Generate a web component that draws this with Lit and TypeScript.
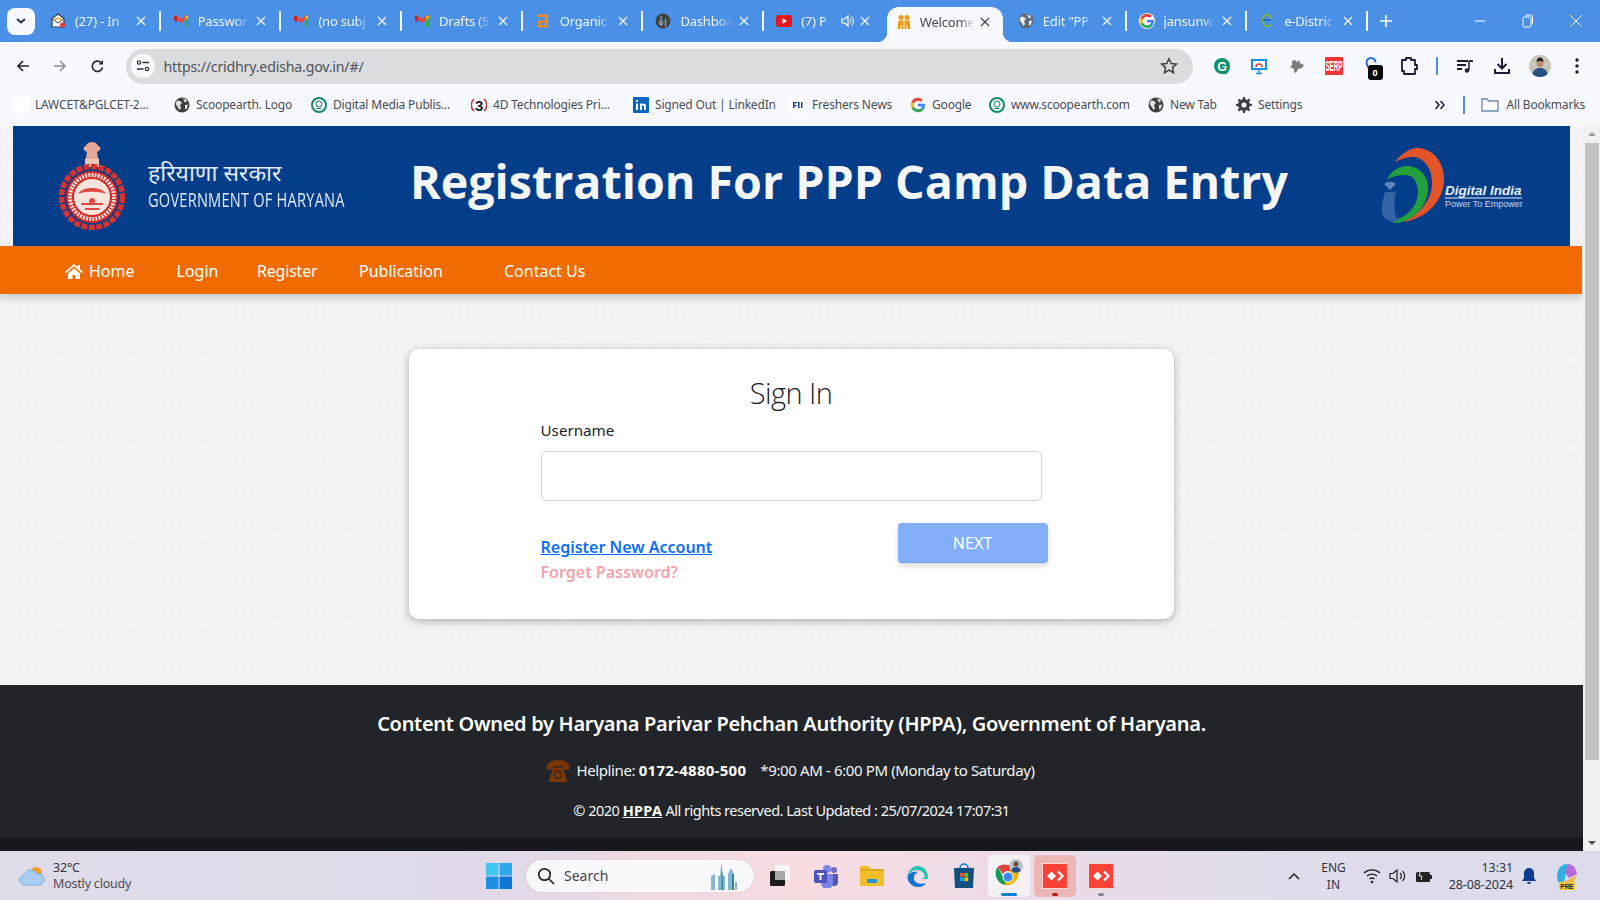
import { LitElement, html, css, svg } from "lit";
import { customElement } from "lit/decorators.js";

const globe = (c = "#3c4043") => svg`<circle cx="8" cy="8" r="7.5" fill="${c}"/><path d="M3 3.5l3 .5 2 2-2 2 1 3-1.5 2L3 9 1.5 7zM9 1.5l3 1 1 2-2 1zM11 8l3-.5-1 4-2 1z" fill="#fff" opacity=".85"/>`;
const gmail = svg`<path d="M1 3v11h3V7l4 3 4-3v7h3V3l-1.500-1L8 6 2.500 2z" fill="#e8453c"/><path d="M1 3v4l3 2V4z" fill="#c5221f"/><path d="M12 7l3-2v9h-3z" fill="#34a853"/><path d="M1 7l3 2v5H1z" fill="#4285f4"/><path d="M12 7V4l3-2v3z" fill="#fbbc04"/>`;
const gicon = svg`<path d="M15 8.200c0-.5 0-1-.1-1.400H8v2.800h4a3.400 3.400 0 0 1-1.500 2.200l2.300 1.800c1.400-1.300 2.200-3.200 2.200-5.400z" fill="#4285f4"/><path d="M8 15.200c2 0 3.600-.7 4.800-1.800l-2.300-1.800c-.7.4-1.500.7-2.500.7-1.900 0-3.500-1.300-4.100-3l-2.400 1.800c1.200 2.400 3.700 4.100 6.500 4.100z" fill="#34a853"/><path d="M3.900 9.300a4.300 4.300 0 0 1 0-2.700L1.500 4.800a7.200 7.200 0 0 0 0 6.400z" fill="#fbbc04"/><path d="M8 3.700c1.100 0 2 .4 2.800 1.100l2-2A7 7 0 0 0 8 .8c-2.800 0-5.300 1.600-6.500 4l2.400 1.800c.6-1.700 2.200-2.900 4.100-2.900z" fill="#ea4335"/>`;
const seal = svg`<circle cx="8" cy="8" r="7" fill="#fff" stroke="#12886c" stroke-width="2"/><circle cx="8" cy="7" r="3" fill="none" stroke="#12886c"/><path d="M5.500 11.500h5" stroke="#12886c"/>`;
const tabsData: any[] = [
  { t: "(27) - In", first: true, i: svg`<path d="M8 1l6 4.500V14H2V5.500z" fill="#fff" stroke="#2f3b4c" stroke-width="1.200"/><path d="M2.500 6l5.500 4 5.500-4" fill="none" stroke="#2f3b4c"/><path d="M5 7.500c0-3 6-3 6 0" fill="none" stroke="#f6a623" stroke-width="1.500"/><circle cx="12.500" cy="12" r="2.500" fill="#e53935"/>` },
  { t: "Passwor", i: gmail },
  { t: "(no subj", i: gmail },
  { t: "Drafts (5", i: gmail },
  { t: "Organic", i: svg`<path d="M3 1.500h10v13H3V7.500h7.500V4H3z" fill="#f58a1f"/><rect x="5.500" y="9.700" width="5" height="2.600" fill="#4a90e6"/>` },
  { t: "Dashboa", i: svg`<circle cx="8" cy="8" r="7.500" fill="#3f4347"/><path d="M6 3v10M10.500 6v8" stroke="#9aa0a6" stroke-width="1.300"/><circle cx="6" cy="10" r="1.800" fill="none" stroke="#9aa0a6"/>` },
  { t: "(7) P", i: svg`<rect x="0" y="2" width="16" height="12" rx="3" fill="#e8151b"/><path d="M6.500 5.300v5.400L11 8z" fill="#fff"/>`, sound: true },
  { t: "Welcome", i: svg`<circle cx="5" cy="3.500" r="2.500" fill="#f39c12"/><circle cx="11" cy="3.500" r="2.500" fill="#f39c12"/><path d="M1.500 15l1-8.500h5V15H5.500v-4h-1v4zM8.500 15V6.500h5l1 8.500h-3v-4h-1v4z" fill="#f39c12"/>`, active: true },
  { t: 'Edit "PP', i: globe("#5f6b7a") },
  { t: "jansunw", i: gicon, white: true },
  { t: "e-Distric", i: svg`<path d="M12 6a4 4 0 0 0-8 0c-1 4 2 8 6 7l2-1" fill="none" stroke="#7cb342" stroke-width="2"/><path d="M4 7h8" stroke="#1565c0" stroke-width="1.500"/>` },
];
const marks = [
  { t: "LAWCET&PGLCET-2...", w: 161, i: svg`<rect width="16" height="16" fill="#fff"/>` },
  { t: "Scoopearth. Logo", w: 137, i: globe() },
  { t: "Digital Media Publis...", w: 160, i: seal },
  { t: "4D Technologies Pri...", w: 162, i: svg`<text x="8" y="13.500" font-size="15" font-weight="700" text-anchor="middle" font-family="Liberation Sans" fill="#222">3</text><path d="M3 2a8 8 0 0 0 0 12M13 2a8 8 0 0 1 0 12" fill="none" stroke="#d32f2f" stroke-width="1.500"/>` },
  { t: "Signed Out | LinkedIn", w: 157, i: svg`<rect width="16" height="16" rx="1" fill="#0a66c2"/><path d="M3 6.500h2V13H3zM3 3h2v2H3zM7 6.500h2v1c1-1.500 4-1.500 4 1.500V13h-2V9.500c0-1.500-2-1.500-2 0V13H7z" fill="#fff"/>` },
  { t: "Freshers News", w: 120, i: svg`<rect width="16" height="16" fill="#fff"/><path d="M3 5h4v1.200H4.500V8H6.500v1.200h-2V11H3zM8 5h1.500v6H8zM11 5h1.500v6H11z" fill="#1d3f8f"/>` },
  { t: "Google", w: 79, i: gicon },
  { t: "www.scoopearth.com", w: 159, i: seal },
  { t: "New Tab", w: 88, i: globe() },
  { t: "Settings", w: 80, i: svg`<path d="M7 0h2l.4 2.200 1.600.7 1.900-1.300 1.400 1.400-1.300 1.900.7 1.600 2.200.4v2l-2.200.4-.7 1.600 1.300 1.900-1.400 1.400-1.900-1.300-1.600.7L9 16H7l-.4-2.200-1.600-.7-1.900 1.300-1.400-1.400 1.300-1.900-.7-1.600L0 9V7l2.200-.4.700-1.600L1.600 3.100 3 1.700l1.900 1.300 1.600-.7z" fill="#3c4043"/><circle cx="8" cy="8" r="2.500" fill="#f7f9fe"/>` },
];
const redTile = svg`<rect x=".5" y=".5" width="25" height="25" fill="#f94138" stroke="#f7d9d8"/><path d="M9.500 8.500l4.500 4.500-4.500 4.500L5 13z" fill="#fff"/><path d="M16 8.500l4.500 4.500-4.500 4.500" fill="none" stroke="#fff" stroke-width="2.200"/>`;

@customElement("app-root")
export class AppRoot extends LitElement {
  static styles = css`
    :host { display: block; width: 1600px; height: 900px; overflow: hidden; font-family: "Noto Sans", sans-serif; background: #f4f4f4; position: relative; }
    * { box-sizing: border-box; }
    .tabstrip { height: 42px; background: #4a90e6; display: flex; align-items: center; padding-left: 7px; color: #fff; position: relative; }
    .tabdrop { width: 28px; height: 27px; border-radius: 8px; background: #f7f9fe; display: flex; align-items: center; justify-content: center; margin-right: 5px; flex: none; }
    .tab { width: 120.7px; height: 42px; display: flex; align-items: center; padding-left: 12px; font-size: 13px; gap: 9px; position: relative; color: #eef4fc; flex: none; }
    .tab.first { padding-left: 10px; gap: 9px; }
    .tab .label { flex: 1; min-width: 0; white-space: nowrap; letter-spacing: -.2px; -webkit-mask-image: linear-gradient(90deg, #000 70%, transparent 98%); mask-image: linear-gradient(90deg, #000 70%, transparent 98%); }
    .tab .x { flex: none; margin-right: 15px; margin-left: -4px; }
    .tab .sep { position: absolute; right: 0; top: 11px; width: 2px; height: 20px; background: #f7f9fe; }
    .tab.active { background: #f7f9fe; color: #45494e; height: 35px; align-self: flex-end; padding-bottom: 6px; border-radius: 12px 12px 0 0; width: 116px; margin-left: 2px; margin-right: 3px; padding-left: 9px; gap: 8px; }
    .tab.active .x { margin-right: 13px; }
    .tab.active::before, .tab.active::after { content: ""; position: absolute; bottom: 0; width: 10px; height: 10px; }
    .tab.active::before { left: -10px; background: radial-gradient(circle at 0 0, transparent 10px, #f7f9fe 10.500px); }
    .tab.active::after { right: -10px; background: radial-gradient(circle at 100% 0, transparent 10px, #f7f9fe 10.500px); }
    .fav { width: 16px; height: 16px; flex: none; display: block; }
    .fav.w { background: #fff; border-radius: 50%; }
    .plus { margin-left: 12px; flex: none; }
    .winctl { position: absolute; right: 0; top: 0; display: flex; height: 42px; align-items: center; }
    .winctl div { width: 48px; display: flex; justify-content: center; }
    .toolbar { height: 42px; background: #f7f9fe; display: flex; align-items: center; padding: 6px 0 0 13px; border-radius: 10px 0 0 0; }
    .navbtn { width: 20px; height: 20px; display: flex; align-items: center; justify-content: center; flex: none; margin-right: 17px; }
    .omni { width: 1067px; height: 35px; border-radius: 18px; background: #dadce0; display: flex; align-items: center; padding-left: 5px; margin-left: 1.500px; font-size: 14.200px; color: #4f5358; letter-spacing: -.2px; flex: none; }
    .tune { width: 24px; height: 24px; border-radius: 50%; background: #f7f9fe; display: flex; align-items: center; justify-content: center; margin-right: 9px; flex: none; }
    .url { flex: 1; }
    .omni .star { margin-right: 15px; display: flex; }
    .exts { display: flex; align-items: center; margin-left: 18px; }
    .ext { width: 22px; height: 22px; display: flex; align-items: center; justify-content: center; margin-right: 15.500px; position: relative; flex: none; }
    .ext.p17 { margin-right: 17px; }
    .ext.p20 { margin-right: 20px; }
    .ext.last { margin-right: 0; width: 12px; }
    .vsep { width: 1.500px; height: 18px; background: #4a90e6; flex: none; margin-right: 16px; margin-left: -1px; }
    .badge { position: absolute; left: 7px; top: 10px; width: 15px; height: 15px; background: #000; color: #fff; font-size: 9px; font-weight: 700; border-radius: 3px; display: flex; align-items: center; justify-content: center; }
    .avatar { border-radius: 50%; overflow: hidden; }
    .marks { height: 42px; background: #f7f9fe; display: flex; align-items: center; padding: 0 0 1px 13px; font-size: 12px; color: #4a4d52; letter-spacing: -.18px; position: relative; }
    .mark { display: flex; align-items: center; gap: 6px; white-space: nowrap; flex: none; }
    .allmarks { margin-left: auto; display: flex; align-items: center; padding-right: 15px; }
    .folder { margin: 0 8px 0 0; display: flex; }
    .chev { margin-right: 17px; display: flex; }
    .msep { width: 2px; height: 18px; background: #4a90e6; margin-right: 16px; }

    .page { height: 725px; position: relative; display: flex; flex-direction: column; background-color: #f4f4f4;
      background-image: repeating-linear-gradient(0deg, rgba(0,0,0,.006) 0 3px, transparent 3px 11px), repeating-linear-gradient(90deg, rgba(0,0,0,.007) 0 2px, transparent 2px 9px); }
    .scroll { position: absolute; right: 0; top: 0; bottom: 0; width: 17px; background: #f1f1f1; display: flex; flex-direction: column; align-items: center; z-index: 3; }
    .scroll .thumb { width: 14px; height: 617px; background: #c1c1c1; flex: none; }
    .arrow { width: 0; height: 0; border-left: 4px solid transparent; border-right: 4px solid transparent; }
    .arrow.up { border-bottom: 4px solid #9b9b9b; margin: 6px 0 7px; }
    .arrow.dn { border-top: 4px solid #4f4f4f; margin-top: auto; margin-bottom: 6px; }
    .banner { height: 120px; margin: 0 30px 0 13px; background: #043e8b; display: flex; align-items: center; color: #fff; position: relative; flex: none; }
    .emblem { width: 70px; height: 88px; margin-left: 44px; flex: none; display: block; }
    .gov { margin-left: 21px; display: flex; flex-direction: column; gap: 3px; padding-bottom: 2px; color: #e3eaf5; width: 210px; flex: none; }
    .gov .hi { font-size: 23px; line-height: 26px; height: 26px; }
    .gov .en { font-size: 20px; font-weight: 500; line-height: 24px; transform-origin: left center; transform: scaleX(.73); white-space: nowrap; font-family: "Open Sans", sans-serif; letter-spacing: .3px; }
    .title { font-family: "Open Sans", sans-serif; font-weight: 700; font-size: 46.600px; margin: 0 0 10px 52px; white-space: nowrap; color: #f5f6f8; flex: none; }
    .dilogo { position: absolute; left: 1367px; top: 21px; display: block; }
    .menu { height: 48px; margin-right: 18px; background: #f06c00; display: flex; align-items: center; padding: 1px 0 0 65px; color: #fff; font-size: 16px; box-shadow: 0 4px 8px rgba(0,0,0,.18); position: relative; z-index: 2; flex: none; }
    .menu a { white-space: nowrap; display: flex; align-items: center; gap: 6px; flex: none; }
    .m1 { width: 111.500px; }
    .m2 { width: 80.500px; }
    .m3 { width: 102px; letter-spacing: -.2px; }
    .m4 { width: 145px; }
    .main { flex: 1; display: flex; justify-content: center; padding: 55px 0 0 0; }
    .card { width: 765px; height: 270px; margin-left: -18px; background: #fff; border-radius: 10px; box-shadow: 0 2px 8px rgba(0,0,0,.3); padding: 0 132px; position: relative; flex: none; }
    h1 { font-weight: 300; font-size: 29px; color: #212529; margin: 0; text-align: center; line-height: 40px; padding-top: 24px; height: 64px; letter-spacing: -.6px; font-family: "Open Sans", sans-serif; }
    label { display: block; font-size: 15.200px; color: #212529; line-height: 22px; margin-top: 6px; }
    .input { width: 501px; height: 50px; border: 1px solid #ced4da; border-radius: 5px; margin-top: 10px; background: #fff; }
    .row { display: flex; justify-content: space-between; margin-top: 22px; width: 507px; }
    .links { padding-top: 13px; font-weight: 600; font-size: 16px; display: flex; flex-direction: column; gap: 3px; line-height: 22px; }
    .links a:first-child { color: #0d6efd; text-decoration: underline; }
    .links a:last-child { color: #f5a3ab; }
    .next { width: 150px; height: 40px; padding-top: 1px; background: #83aff8; border: 0; border-bottom: 1px solid #6ea1f7; border-radius: 4px; color: #fff; font-size: 16px; display: flex; align-items: center; justify-content: center; box-shadow: 0 3px 6px rgba(0,0,0,.14); flex: none; }
    .footer { height: 166px; margin-right: 17px; background: #212529; color: #f5f5f5; text-align: center; flex: none; display: flex; flex-direction: column; align-items: center; }
    .f1 { font-size: 20px; font-weight: 600; color: #fff; margin-top: 25px; line-height: 28px; letter-spacing: -.3px; white-space: nowrap; }
    .f2 { font-size: 15px; margin-top: 18px; line-height: 28px; display: flex; align-items: center; gap: 5px; letter-spacing: -.38px; margin-left: -3px; white-space: pre; }
    .f2 b { font-weight: 700; color: #fff; letter-spacing: .28px; }
    .f3 b { font-weight: 700; color: #fff; letter-spacing: .3px; }
    .f3 { font-size: 14.500px; margin-top: 13px; line-height: 26px; letter-spacing: -.5px; white-space: nowrap; }
    .f3 b { text-decoration: underline; }
    .fstrip { margin-top: auto; height: 13px; width: 100%; background: #15191d; flex: none; }

    .taskbar { position: absolute; left: 0; right: 0; bottom: 0; height: 49px; background: linear-gradient(90deg, #dfdcea 0%, #e0d8e8 30%, #f8dce0 50%, #eedce8 60%, #dedcec 85%, #dcdcec 100%); display: flex; align-items: center; z-index: 5; font-size: 12.500px; color: #33343a; }
    .weather { display: flex; align-items: center; margin-left: 19px; gap: 6px; width: 467px; flex: none; line-height: 16px; letter-spacing: -.2px; }
    .weather .t2 { color: #4a4b55; }
    .start { flex: none; margin-right: 14px; display: block; }
    .search { width: 228px; height: 32px; background: #f8f7fb; border-radius: 16px; display: flex; align-items: center; padding-left: 11px; font-size: 14px; gap: 9px; color: #44454b; flex: none; margin-right: 3.500px; box-shadow: 0 0 1px rgba(0,0,0,.2); position: relative; }
    .city { margin-left: auto; margin-right: 15px; display: flex; }
    .ticon { width: 45.800px; height: 46px; display: flex; align-items: center; justify-content: center; flex: none; position: relative; border: 2px solid transparent; background-clip: padding-box; border-radius: 7px; }
    .ticon.c { background-color: #f5f1f6; }
    .ticon.r { background-color: #ecb6b4; }
    .dot { position: absolute; bottom: 1px; left: 50%; transform: translateX(-50%); height: 3px; border-radius: 2px; width: 6px; background: #b8201c; }
    .dot.b { width: 16px; background: #0a7fd4; }
    .dot.g { background: #8b8a93; }
    .tray { margin-left: auto; display: flex; align-items: center; padding-right: 21px; }
    .lang { text-align: center; font-size: 12px; line-height: 17px; margin: 0 17px 0 21px; }
    .clock { text-align: right; font-size: 12.500px; line-height: 17px; margin: 0 8px 0 16px; letter-spacing: -.1px; }
    .ml8 { margin-right: 8px; }
    .bell { margin-right: 16px; }
  `;

  x() {
    return html`<svg class="x" width="10" height="10" viewBox="0 0 10 10"><path d="M1 1l8 8M9 1l-8 8" stroke="currentColor" stroke-width="1.300"/></svg>`;
  }

  render() {
    return html`
      <div class="tabstrip">
        <div class="tabdrop"><svg width="10" height="6" viewBox="0 0 10 6"><path d="M1 1l4 3.500L9 1" fill="none" stroke="#1f2b45" stroke-width="1.800"/></svg></div>
        ${tabsData.map((t: any, i) => html`
          <div class="tab ${t.active ? "active" : ""} ${t.first ? "first" : ""}">
            <svg class="fav ${t.white ? "w" : ""}" viewBox="0 0 16 16">${t.i}</svg>
            <span class="label">${t.t}</span>
            ${t.sound ? html`<svg width="14" height="14" viewBox="0 0 14 14"><path d="M1 5h3l3-3v10L4 9H1z" fill="none" stroke="#fff" stroke-width="1.200"/><path d="M9 4.500a3.500 3.500 0 0 1 0 5M10.500 2.500a6 6 0 0 1 0 9" fill="none" stroke="#fff"/></svg>` : ""}
            ${this.x()}
            ${[0, 1, 2, 3, 4, 5, 8, 9, 10].includes(i) ? html`<span class="sep"></span>` : ""}
          </div>`)}
        <svg class="plus" width="12" height="12" viewBox="0 0 12 12"><path d="M6 0v12M0 6h12" stroke="#fff" stroke-width="1.600"/></svg>
        <div class="winctl">
          <div><svg width="12" height="12" viewBox="0 0 12 12"><path d="M1 6h10" stroke="#fff" stroke-width="1"/></svg></div>
          <div><svg width="12" height="14" viewBox="0 0 12 14"><rect x="1" y="3" width="8" height="10" rx="1.500" fill="none" stroke="#fff"/><path d="M3.500 1h5a2 2 0 0 1 2 2v7" fill="none" stroke="#fff"/></svg></div>
          <div><svg width="14" height="14" viewBox="0 0 14 14"><path d="M1 1l12 12M13 1L1 13" stroke="#fff" stroke-width="1"/></svg></div>
        </div>
      </div>
      <div class="toolbar">
        <div class="navbtn"><svg width="14" height="14" viewBox="0 0 14 14"><path d="M13 7H2M7 2L2 7l5 5" fill="none" stroke="#1f2430" stroke-width="1.600"/></svg></div>
        <div class="navbtn"><svg width="14" height="14" viewBox="0 0 14 14"><path d="M1 7h11M7 2l5 5-5 5" fill="none" stroke="#8d8f96" stroke-width="1.600"/></svg></div>
        <div class="navbtn"><svg width="15" height="15" viewBox="0 0 15 15"><path d="M12.500 8.500A5.200 5.200 0 1 1 11 3.500" fill="none" stroke="#1f2430" stroke-width="1.600"/><path d="M13 1v4.500H8.500z" fill="#1f2430"/></svg></div>
        <div class="omni">
          <div class="tune"><svg width="14" height="12" viewBox="0 0 14 12"><circle cx="3" cy="2.500" r="1.700" fill="none" stroke="#333" stroke-width="1.200"/><path d="M6.500 2.500H13M1 9h6.500" stroke="#333" stroke-width="1.300"/><circle cx="11" cy="9" r="1.700" fill="none" stroke="#333" stroke-width="1.200"/></svg></div>
          <span class="url">https://cridhry.edisha.gov.in/#/</span>
          <span class="star"><svg width="18" height="18" viewBox="0 0 18 18"><path d="M9 1.800l2.200 4.700 5.100.6-3.800 3.500 1 5.100L9 13.200l-4.500 2.500 1-5.100-3.800-3.500 5.100-.6z" fill="none" stroke="#3c4043" stroke-width="1.500"/></svg></span>
        </div>
        <div class="exts">
          <div class="ext"><svg width="18" height="18" viewBox="0 0 18 18"><path d="M9 1a8 8 0 0 1 8 8c0 4-2 7-4 8H9a8 8 0 0 1 0-16z" fill="#0f8f6a"/><text x="9" y="13.500" font-size="12.500" font-weight="700" text-anchor="middle" fill="#fff" font-family="Liberation Sans">G</text></svg></div>
          <div class="ext"><svg width="20" height="20" viewBox="0 0 20 20"><rect x="2" y="3" width="16" height="11" fill="#1a8fe3"/><rect x="4" y="5" width="12" height="7" fill="#fff"/><path d="M7 11a3 3 0 0 1 6 0" fill="none" stroke="#e53935" stroke-width="1.500"/><path d="M10 14v3M7 17.500h6" stroke="#1a8fe3" stroke-width="1.500"/></svg></div>
          <div class="ext"><svg width="18" height="18" viewBox="0 0 18 18"><path d="M4 4l3-1 2 2 2-2 1 3 4 2-2 3-4 1-2 4-2-1v-3L2 10l2-2z" fill="#7d7d7d"/></svg></div>
          <div class="ext"><svg width="20" height="20" viewBox="0 0 20 20"><rect x="1" y="1" width="18" height="18" fill="#ef3535" rx="1"/><text x="23.800" y="15" transform="scale(.42 1)" font-size="15" font-weight="700" fill="#fff" text-anchor="middle" font-family="Liberation Sans">SERP</text></svg></div>
          <div class="ext"><svg width="16" height="20" viewBox="0 0 16 20"><path d="M6 15C4 11 2.500 9 2.500 6.500a4.500 4.500 0 0 1 9 0" fill="none" stroke="#1f6fd6" stroke-width="2"/></svg><span class="badge">0</span></div>
          <div class="ext p17"><svg width="20" height="20" viewBox="0 0 20 20"><path d="M3 4h4V2h5v2h4v5h2v4h-2v5H5v-3H3z" fill="none" stroke="#1b1b3a" stroke-width="1.800" stroke-linejoin="round"/></svg></div>
          <span class="vsep"></span>
          <div class="ext"><svg width="18" height="18" viewBox="0 0 18 18"><path d="M1 4h11M1 8h9M1 12h5" stroke="#1b1b3a" stroke-width="1.800"/><path d="M13 4v9" stroke="#1b1b3a" stroke-width="1.500"/><circle cx="11" cy="13.500" r="2.300" fill="#1b1b3a"/><path d="M13 4h4" stroke="#1b1b3a" stroke-width="1.800"/></svg></div>
          <div class="ext"><svg width="20" height="20" viewBox="0 0 20 20"><path d="M10 2v10M5.500 8l4.500 4.500L14.500 8" fill="none" stroke="#1b1b3a" stroke-width="2"/><path d="M3 13v4h14v-4" fill="none" stroke="#1b1b3a" stroke-width="2"/></svg></div>
          <div class="ext avatar p20"><svg width="22" height="22" viewBox="0 0 22 22"><rect width="22" height="22" fill="#c9c4b8"/><ellipse cx="11" cy="8" rx="3.300" ry="4" fill="#b8886a"/><path d="M7.500 7c0-3 1.500-4.500 3.500-4.500S14.500 4 14.500 7c-1-1.500-6-1.500-7 0z" fill="#2a211c"/><path d="M3 22c0-7 4-9 8-9s8 2 8 9z" fill="#27517f"/></svg></div>
          <div class="ext last"><svg width="4" height="16" viewBox="0 0 4 16"><circle cx="2" cy="2" r="1.700" fill="#1b1b3a"/><circle cx="2" cy="8" r="1.700" fill="#1b1b3a"/><circle cx="2" cy="14" r="1.700" fill="#1b1b3a"/></svg></div>
        </div>
      </div>
      <div class="marks">
        ${marks.map((m) => html`<div class="mark" style="width:${m.w}px"><svg class="fav" viewBox="0 0 16 16">${m.i}</svg><span>${m.t}</span></div>`)}
        <div class="allmarks">
          <span class="chev"><svg width="12" height="10" viewBox="0 0 12 10"><path d="M1.500 1l3.500 4-3.500 4M6.500 1l3.500 4-3.500 4" fill="none" stroke="#1b1b3a" stroke-width="1.500"/></svg></span>
          <span class="msep"></span>
          <span class="folder"><svg width="18" height="15" viewBox="0 0 18 15"><path d="M1 2h5l2 2h9v10H1z" fill="none" stroke="#7089a8" stroke-width="1.300"/></svg></span>
          <span>All Bookmarks</span>
        </div>
      </div>
      <div class="page">
        <div class="scroll"><span class="arrow up"></span><div class="thumb"></div><span class="arrow dn"></span></div>
        <div class="banner">
          <svg class="emblem" viewBox="0 0 70 88">
            <path d="M29 4c1-3 3-4 6-4s5 1 6 4c2 0 3 2 2 4l-3 2 1 6 1 1v8H28v-8l1-1 1-6-3-2c-1-2 0-4 2-4z" fill="#e6a997"/>
            <path d="M28 17h14v8H28z" fill="#f0c6b8"/>
            <circle cx="35" cy="55" r="30.500" fill="none" stroke="#d9322c" stroke-width="5.500" stroke-dasharray="6 1.500"/>
            <circle cx="35" cy="55" r="26" fill="#d52b26"/>
            <circle cx="35" cy="55" r="22" fill="none" stroke="#fff" stroke-width="4" stroke-dasharray="2 1.200" opacity=".85"/>
            <circle cx="35" cy="55" r="18" fill="#f7e4dd"/>
            <path d="M21 52c4-8 24-8 28 0-6-3-22-3-28 0z" fill="#e04a42"/>
            <path d="M24 62h22M28 67h14" stroke="#e04a42" stroke-width="2"/>
            <circle cx="35" cy="59" r="3" fill="#e04a42"/>
          </svg>
          <div class="gov"><span class="hi">हरियाणा सरकार</span><span class="en">GOVERNMENT OF HARYANA</span></div>
          <div class="title">Registration For PPP Camp Data Entry</div>
          <svg class="dilogo" width="150" height="78" viewBox="0 0 150 78">
            <path d="M15 15C22 6 30 1 38 1c16 1 26 15 26 31 0 22-18 40-41 43 15-7 28-20 29-37 1-16-8-27-18-28-7 0-14 2-19 5z" fill="#e4542a"/>
            <path d="M7 33c4-9 12-14 20-14 12 0 21 10 21 22 0 17-14 33-31 35-3 0-5-1-7-2 15-2 28-14 28-29 0-10-5-17-12-17-7 0-14 1-19 5z" fill="#22a03c"/>
            <path d="M5 45h11c-2 7-3 20 2 29-7 2-14-1-16-8-1-6 1-14 3-21z" fill="#3264a6"/>
            <path d="M4 37c3-3 9-3 12 0l-6 6z" fill="#5c86bc"/>
            <text x="65" y="48" font-family="Liberation Sans" font-weight="700" font-style="italic" font-size="13.500" fill="#e8eef7">Digital India</text>
            <path d="M65 51h77" stroke="#e8eef7"/>
            <text x="65" y="60" font-family="Liberation Sans" font-size="9" fill="#c9d6e8">Power To Empower</text>
          </svg>
        </div>
        <div class="menu">
          <a class="m1"><svg width="18" height="16" viewBox="0 0 18 16"><path d="M9 1L0 9l1 1.200L9 3.300l8 6.900L18 9l-3-2.700V2h-2.500v2.100z" fill="#fff"/><path d="M3 10.500L9 5.200l6 5.300V16h-4.500v-4h-3v4H3z" fill="#fff"/></svg>Home</a>
          <a class="m2">Login</a>
          <a class="m3">Register</a>
          <a class="m4">Publication</a>
          <a>Contact Us</a>
        </div>
        <div class="main">
          <div class="card">
            <h1>Sign In</h1>
            <label>Username</label>
            <div class="input"></div>
            <div class="row">
              <div class="links"><a>Register New Account</a><a>Forget Password?</a></div>
              <div class="next">NEXT</div>
            </div>
          </div>
        </div>
        <div class="footer">
          <div class="f1">Content Owned by Haryana Parivar Pehchan Authority (HPPA), Government of Haryana.</div>
          <div class="f2"><svg width="26" height="25" viewBox="0 0 24 24"><path d="M1 9c0-4 5-7 11-7s11 3 11 7v2h-6V8H7v3H1z" fill="#7a3606"/><path d="M7 9h10l4 14H3z" fill="#7a3606"/><circle cx="12" cy="16" r="3.500" fill="none" stroke="#2a2622" stroke-width="1.200"/></svg><span>Helpline: <b>0172-4880-500</b>    *9:00 AM - 6:00 PM (Monday to Saturday)</span></div>
          <div class="f3">© 2020 <b>HPPA</b> All rights reserved. Last Updated : 25/07/2024 17:07:31</div>
          <div class="fstrip"></div>
        </div>
      </div>
      <div class="taskbar">
        <div class="weather">
          <svg width="28" height="24" viewBox="0 0 28 24"><circle cx="17" cy="9" r="6" fill="#f59d2a"/><path d="M6 21a5 5 0 0 1-1-10 7 7 0 0 1 13-1 5.500 5.500 0 0 1 3 11z" fill="#a9cdf0" stroke="#7fb2e6"/></svg>
          <div><div>32°C</div><div class="t2">Mostly cloudy</div></div>
        </div>
        <svg class="start" width="26" height="26" viewBox="0 0 26 26"><rect x="0" y="0" width="12.500" height="12.500" fill="#43c5f1"/><rect x="13.500" y="0" width="12.500" height="12.500" fill="#2fa8ea"/><rect x="0" y="13.500" width="12.500" height="12.500" fill="#1c8fe2"/><rect x="13.500" y="13.500" width="12.500" height="12.500" fill="#0c78d6"/></svg>
        <div class="search">
          <svg width="18" height="18" viewBox="0 0 18 18"><circle cx="7.500" cy="7.500" r="5.700" fill="none" stroke="#222" stroke-width="1.700"/><path d="M12 12l5 5" stroke="#222" stroke-width="1.700"/></svg>
          <span>Search</span>
          <span class="city"><svg width="30" height="28" viewBox="0 0 30 28"><path d="M2 28V14l4-2v16zM9 28V14h2l1.500-14L14 14h2v14zM19 28V12l3-6 3 6v16zM26 28v-8h2v8z" fill="#86b6d3"/><path d="M12.500 28V8l1.500 6v14zM23 28V12h2v16z" fill="#2f8a8e"/></svg></span>
        </div>
        <div class="ticon"><svg width="24" height="24" viewBox="0 0 24 24"><rect x="7" y="1" width="15" height="15" rx="1" fill="#f6f3f6"/><rect x="2" y="7" width="15" height="15" rx="1.500" fill="#1c1c1c"/><rect x="7" y="7" width="10" height="9" fill="#a9a6aa"/></svg></div>
        <div class="ticon"><svg width="26" height="24" viewBox="0 0 26 24"><circle cx="21" cy="6" r="3" fill="#6b6cc6"/><path d="M17 10h8v8a4 4 0 0 1-8 0z" fill="#5558af"/><circle cx="14" cy="5" r="4" fill="#7b83eb"/><path d="M8 10h12v9a6 6 0 0 1-12 0z" fill="#7b83eb"/><rect x="1" y="6" width="13" height="13" rx="2" fill="#4b53bc"/><path d="M4 9h7v1.800H8.400V16H6.600v-5.200H4z" fill="#fff"/></svg></div>
        <div class="ticon"><svg width="26" height="24" viewBox="0 0 26 24"><path d="M1 2h9l2 3h13v17H1z" fill="#f2bd29"/><path d="M1 5h24v2H1z" fill="#e0a61c"/><rect x="8" y="15" width="10" height="4" rx="1" fill="#1f95d8"/></svg></div>
        <div class="ticon"><svg width="24" height="24" viewBox="0 0 24 24"><path d="M22 13c0-6-4-11-10-11C6 2 2 7 1.500 12c2-4 5-6 9-6 5 0 8 3 8 6 0 2-2 3-4 3h7z" fill="#2cc2b0"/><path d="M1.500 12C1 18 6 23 12 23c3 0 6-1 8-4-6 2-13 0-12-6 .3-3 3-5 5-5-5-1-10 0-11.500 4z" fill="#1173cf"/></svg></div>
        <div class="ticon"><svg width="24" height="26" viewBox="0 0 24 26"><path d="M8 5a4 4 0 0 1 8 0" fill="none" stroke="#0d7cc9" stroke-width="1.500"/><path d="M2 5h20l-1 20H3z" fill="#0f4e80"/><path d="M8 10h3.800v3.800H8z" fill="#f25022"/><path d="M12.400 10h3.800v3.800h-3.800z" fill="#7fba00"/><path d="M8 14.400h3.800v3.800H8z" fill="#00a4ef"/><path d="M12.400 14.400h3.800v3.800h-3.800z" fill="#ffb900"/></svg></div>
        <div class="ticon c"><svg width="30" height="34" viewBox="0 0 30 34"><path d="M14 6a12 12 0 0 1 10.400 6H14a6 6 0 0 0-5.200 3L3.600 8A12 12 0 0 1 14 6z" fill="#db4437"/><path d="M3.600 8l5.200 9a6 6 0 0 0 5.200 3l-3.600 6A12 12 0 0 1 3.600 8z" fill="#0f9d58"/><path d="M24.400 12A12 12 0 0 1 10.400 26l5.200-9a6 6 0 0 0-1.600-5z" fill="#f4b400"/><circle cx="14" cy="18" r="5" fill="#4285f4" stroke="#fff" stroke-width="1"/><circle cx="22" cy="7" r="7" fill="#b8c0c8"/><circle cx="22" cy="5" r="2.500" fill="#6d4c3a"/><path d="M17.500 12c0-3 2-4 4.500-4s4.500 1 4.500 4a7 7 0 0 1-9 0z" fill="#27517f"/></svg><span class="dot b"></span></div>
        <div class="ticon r"><svg width="26" height="26" viewBox="0 0 26 26">${redTile}</svg><span class="dot"></span></div>
        <div class="ticon"><svg width="26" height="26" viewBox="0 0 26 26">${redTile}</svg><span class="dot g"></span></div>
        <div class="tray">
          <svg width="12" height="8" viewBox="0 0 12 8"><path d="M1 7l5-5 5 5" fill="none" stroke="#222" stroke-width="1.500"/></svg>
          <div class="lang">ENG<br>IN</div>
          <svg class="ml8" width="18" height="16" viewBox="0 0 18 16"><path d="M1 5a12 12 0 0 1 16 0M4 8a8 8 0 0 1 10 0M6.500 11a4 4 0 0 1 5 0" fill="none" stroke="#222" stroke-width="1.300"/><circle cx="9" cy="14" r="1.300" fill="#222"/></svg>
          <svg class="ml8" width="18" height="16" viewBox="0 0 18 16"><path d="M1 5.500h3l4-3.500v12l-4-3.500H1z" fill="none" stroke="#222" stroke-width="1.200"/><path d="M11 5a4 4 0 0 1 0 6M13.500 3a7 7 0 0 1 0 10" fill="none" stroke="#222" stroke-width="1.200"/></svg>
          <svg width="18" height="16" viewBox="0 0 18 16"><rect x="1" y="4" width="14" height="10" rx="1.500" fill="#222"/><rect x="15" y="7" width="2" height="4" fill="#222"/><path d="M6 1L4 8h3l-1 4" stroke="#e9e4ef" fill="none"/></svg>
          <div class="clock">13:31<br>28-08-2024</div>
          <svg class="bell" width="16" height="18" viewBox="0 0 16 18"><path d="M8 1a5 5 0 0 1 5 5v5l2 3H1l2-3V6a5 5 0 0 1 5-5z" fill="#0e3d8c"/><path d="M6 15h4a2 2 0 0 1-4 0z" fill="#0e3d8c"/></svg>
          <svg width="26" height="28" viewBox="0 0 26 28"><path d="M4 14C5 5 9 2 15 2l-4 18H5z" fill="#2fb0e3"/><path d="M15 2c5 0 8 4 9 10l-8 4-4-5z" fill="#b86bd8"/><path d="M6 20c6 0 14-4 18-8l-3 8z" fill="#f2b84b"/><rect x="6" y="20" width="16" height="8" rx="1" fill="#f5c945"/><text x="14" y="26.500" font-size="6.500" font-weight="700" text-anchor="middle" fill="#222" font-family="Liberation Sans">PRE</text></svg>
        </div>
      </div>
    `;
  }
}
